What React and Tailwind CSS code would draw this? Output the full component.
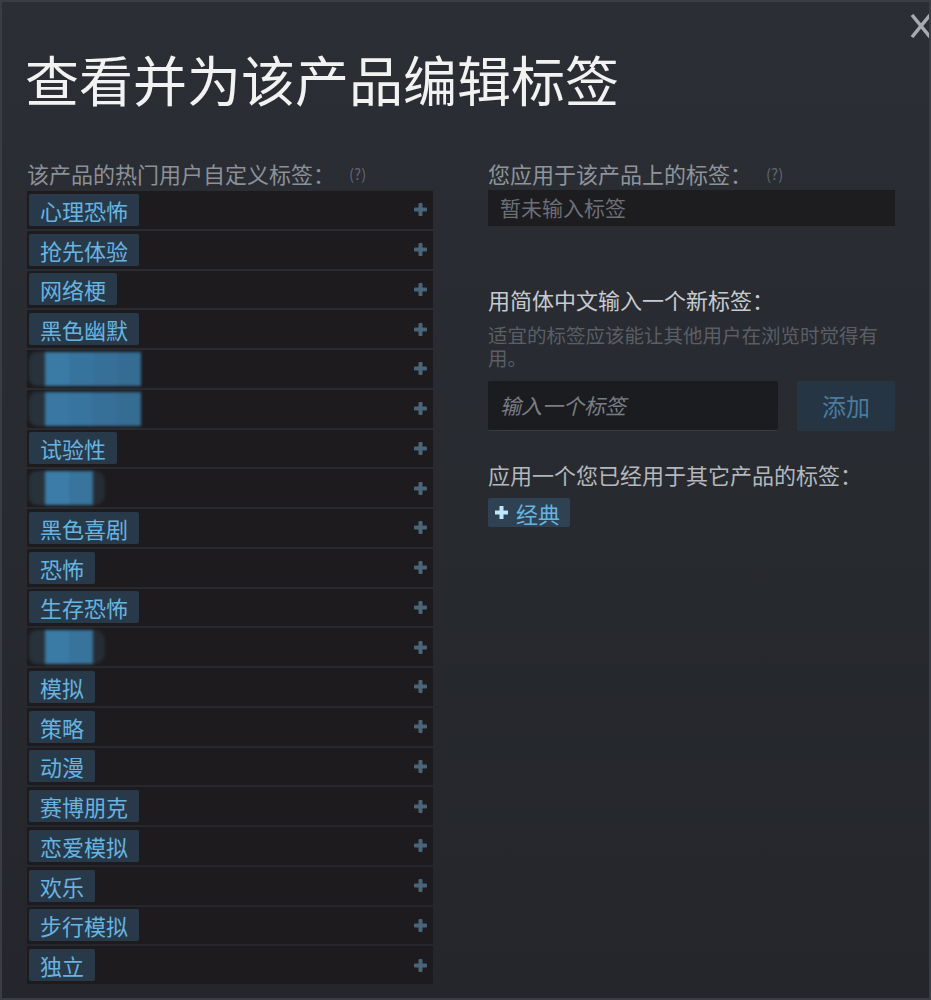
import React from 'react';

const FONT = { fontFamily: '"Noto Sans CJK SC", "Noto Sans", sans-serif' };

// Popular tags; object entries are the obscured ones rendered as mosaics
const tags = [
  '心理恐怖', '抢先体验', '网络梗', '黑色幽默',
  { mosaic: ['#3a7ba6', '#37749d', '#367099', '#356c93'], lead: true },
  { mosaic: ['#3878a2', '#37749e', '#366f97', '#356c91'], lead: true },
  '试验性',
  { mosaic: ['#3b7da8', '#38749c'], lead: true, tail: true },
  '黑色喜剧', '恐怖', '生存恐怖',
  { mosaic: ['#3a7ba5', '#37739b'], lead: true, tail: true },
  '模拟', '策略', '动漫', '赛博朋克', '恋爱模拟', '欢乐', '步行模拟', '独立',
];

const PlusIcon = () => (
  <svg width="13" height="13" viewBox="0 0 13 13" className="shrink-0">
    <rect x="4.5" y="0" width="4" height="13" rx="1" fill="#4b6479" />
    <rect x="0" y="4.5" width="13" height="4" rx="1" fill="#4b6479" />
  </svg>
);

const Mosaic = ({ blocks, lead, tail }) => (
  <div className="flex h-[34px] items-stretch blur-[1.5px]">
    {lead && <div className="w-[16px] rounded-l-[8px] bg-[#28323b]" />}
    {blocks.map((c, i) => (
      <div key={i} className="w-[24px]" style={{ backgroundColor: c }} />
    ))}
    {tail && <div className="w-[12px] rounded-r-[10px] bg-[#252c33]" />}
  </div>
);

const TagRow = ({ tag }) => (
  <div className="flex h-[37.75px] items-center justify-between bg-[#1d1b1e] pl-[2px] pr-[6px]">
    {typeof tag === 'string' ? (
      <span className="flex h-[32px] items-center rounded-[2px] bg-[#283a4a] px-[11px] text-[22px] leading-none text-[#67b4e0]">
        {tag}
      </span>
    ) : (
      <Mosaic blocks={tag.mosaic} lead={tag.lead} tail={tag.tail} />
    )}
    <PlusIcon />
  </div>
);

const Hint = () => (
  <span className="ml-[14px] text-[15px] leading-none text-[#60666e]">(?)</span>
);

export default function App() {
  return (
    <div
      className="relative h-[1000px] w-[931px] overflow-hidden border-2 border-[#3a3d43] bg-gradient-to-b from-[#2b2e34] to-[#24262b]"
      style={FONT}
    >
      {/* close button */}
      <svg className="absolute left-[908px] top-[12px]" width="22" height="24" viewBox="0 0 22 24">
        <path d="M2 1 L20 23 M20 1 L2 23" stroke="#a7aaae" strokeWidth="3.5" />
      </svg>

      <h1 className="pl-[23px] pt-[50px] text-[54px] leading-[54px] font-normal text-[#f2f2f2]">
        查看并为该产品编辑标签
      </h1>

      <div className="mt-[56px] flex gap-[55px] pl-[25px]">
        {/* popular tags */}
        <div className="w-[406px]">
          <div className="flex h-[22px] items-center text-[22px] leading-[22px] text-[#8c9198]">
            该产品的热门用户自定义标签：<Hint />
          </div>
          <div className="mt-[7px] flex flex-col gap-[2px]">
            {tags.map((t, i) => (
              <TagRow key={i} tag={t} />
            ))}
          </div>
        </div>

        {/* user's own tags */}
        <div className="w-[407px]">
          <div className="flex h-[22px] items-center text-[22px] leading-[22px] text-[#8f949a]">
            您应用于该产品上的标签：<Hint />
          </div>
          <div className="mt-[6px] flex h-[36px] items-center bg-[#1d1c1f] px-[12px] text-[21px] text-[#6b6f76]">
            暂未输入标签
          </div>

          <div className="mt-[62px] text-[22px] leading-[22px] text-[#c6cbd1]">
            用简体中文输入一个新标签：
          </div>
          <p className="mt-[13px] text-[19.5px] leading-[23px] text-[#5a5f66]">
            适宜的标签应该能让其他用户在浏览时觉得有用。
          </p>

          <div className="mt-[12px] flex items-stretch justify-between">
            <div className="flex h-[50px] w-[290px] items-center rounded-[2px] border-b border-[#3a3c40] bg-[#1b1c1f] px-[12px] text-[21px] italic text-[#7a7e84]">
              输入一个标签
            </div>
            <button className="flex h-[50px] w-[98px] items-center justify-center rounded-[2px] bg-[#253543] text-[24px] text-[#4a7b9e]">
              添加
            </button>
          </div>

          <div className="mt-[32px] text-[22px] leading-[22px] text-[#b3b8be]">
            应用一个您已经用于其它产品的标签：
          </div>
          <button className="mt-[13px] flex h-[29px] items-center gap-[8px] rounded-[2px] bg-[#2e4253] pl-[7px] pr-[10px] text-[22px] leading-none text-[#67b4e0]">
            <svg width="13" height="13" viewBox="0 0 13 13">
              <rect x="4.5" y="0" width="4" height="13" fill="#bfe6fb" />
              <rect x="0" y="4.5" width="13" height="4" fill="#bfe6fb" />
            </svg>
            经典
          </button>
        </div>
      </div>
    </div>
  );
}
